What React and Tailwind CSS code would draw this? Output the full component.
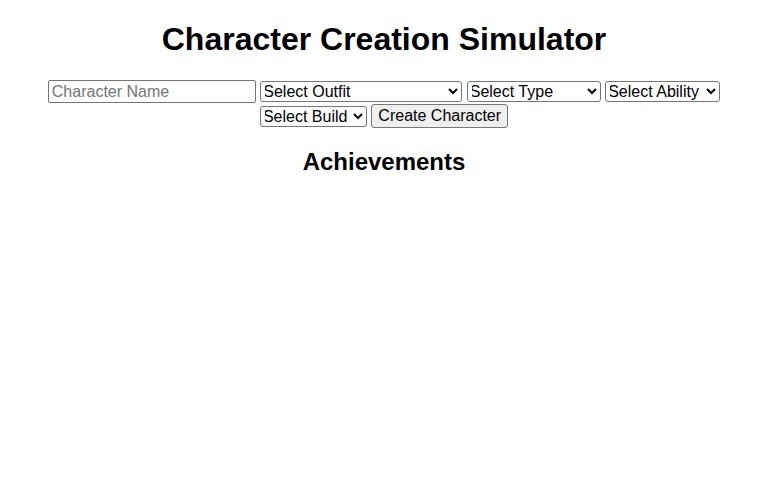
import React, { useState } from "react";

const selectCls =
  "border border-[#767676] rounded-[3px] bg-white text-black text-base leading-[19px] h-[21px] pl-0 pr-0 -indent-[2px] align-middle";

export default function App() {
  const [name, setName] = useState("");
  const [outfit, setOutfit] = useState("");
  const [type, setType] = useState("");
  const [ability, setAbility] = useState("");
  const [build, setBuild] = useState("");

  return (
    <div className="min-h-screen bg-white text-black text-center font-['Liberation_Sans',Arial,sans-serif]">
      <h1 className="pt-[21px] text-[32px] font-bold leading-[37px] mb-[21px]">
        Character Creation Simulator
      </h1>

      <div className="mx-auto w-[680px] leading-[24px]">
        <input
          type="text"
          value={name}
          onChange={(e) => setName(e.target.value)}
          placeholder="Character Name"
          className="w-[208px] h-[23px] border border-[#767676] rounded-[2px] px-[3px] text-base align-middle placeholder:text-[#757575]"
        />{" "}
        <select value={outfit} onChange={(e) => setOutfit(e.target.value)} className={selectCls + " w-[202px]"}>
          <option value="">Select Outfit</option>
          <option>Knight Armor</option>
          <option>Wizard Robe</option>
        </select>{" "}
        <select value={type} onChange={(e) => setType(e.target.value)} className={selectCls + " w-[134px]"}>
          <option value="">Select Type</option>
          <option>Warrior</option>
          <option>Mage</option>
        </select>{" "}
        <select value={ability} onChange={(e) => setAbility(e.target.value)} className={selectCls + " w-[115px]"}>
          <option value="">Select Ability</option>
          <option>Fireball</option>
          <option>Stealth</option>
        </select>{" "}
        <select value={build} onChange={(e) => setBuild(e.target.value)} className={selectCls + " w-[107px]"}>
          <option value="">Select Build</option>
          <option>Slim</option>
          <option>Muscular</option>
        </select>{" "}
        <button className="h-[24px] px-[6px] border border-[#767676] rounded-[3px] bg-[#efefef] text-base leading-[20px] align-middle">
          Create Character
        </button>
      </div>

      <h2 className="mt-[20px] text-2xl font-bold leading-[28px]">Achievements</h2>
    </div>
  );
}
